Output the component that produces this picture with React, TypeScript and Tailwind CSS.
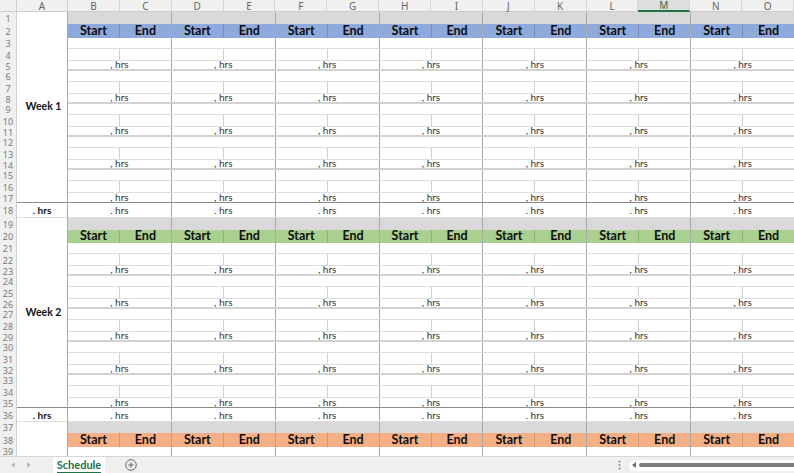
import React from "react";

type T =
  | "gray"
  | "blue"
  | "green"
  | "orange"
  | "blank"
  | "split"
  | "hrs"
  | "hrsLast"
  | "total"
  | "white";
type Row = { n: number; h: number; t: T };

function buildRows(): Row[] {
  const r: Row[] = [];
  r.push({ n: 1, h: 12, t: "gray" });
  r.push({ n: 2, h: 14, t: "blue" });
  let n = 3;
  for (let k = 0; k < 5; k++) {
    r.push({ n: n++, h: 11, t: "blank" });
    r.push({ n: n++, h: 12, t: "split" });
    r.push({ n: n++, h: 10, t: k === 4 ? "hrsLast" : "hrs" });
  }
  r.push({ n: 18, h: 15, t: "total" });
  r.push({ n: 19, h: 12, t: "gray" });
  r.push({ n: 20, h: 13, t: "green" });
  n = 21;
  for (let k = 0; k < 5; k++) {
    r.push({ n: n++, h: 11, t: "blank" });
    r.push({ n: n++, h: 12, t: "split" });
    r.push({ n: n++, h: 10, t: k === 4 ? "hrsLast" : "hrs" });
  }
  r.push({ n: 36, h: 14, t: "total" });
  r.push({ n: 37, h: 11, t: "gray" });
  r.push({ n: 38, h: 14, t: "orange" });
  r.push({ n: 39, h: 9, t: "white" });
  return r;
}

const ROWS = buildRows();

const H: Record<number, string> = {
  9: "h-[9px]",
  10: "h-[10px]",
  11: "h-[11px]",
  12: "h-[12px]",
  13: "h-[13px]",
  14: "h-[14px]",
  15: "h-[15px]",
};

const ROW_CLS: Record<T, string> = {
  gray: "bg-[#d9d9d9]",
  blue: "bg-[#8ea9db]",
  green: "bg-[#a9d08e]",
  orange: "bg-[#f4b084]",
  blank: "border-b border-[#dedede]",
  split: "border-b border-[#dedede]",
  hrs: "border-b-2 border-[#d2d2d2]",
  hrsLast: "border-b border-[#8c8c8c]",
  total: "border-b border-[#dedede]",
  white: "",
};

const LETTERS = ["B", "C", "D", "E", "F", "G", "H", "I", "J", "K", "L", "M", "N", "O"];

function Pair({ t, last }: { t: T; last: boolean }) {
  const br = last ? "" : "border-r border-[#a9a9a9]";
  if (t === "blue" || t === "green" || t === "orange") {
    return (
      <div className={`flex-1 flex ${br}`}>
        <div className="flex-1 flex items-center justify-center border-r border-[#00000026] text-[12.5px] font-bold leading-none text-[#0d0d0d]">
          Start
        </div>
        <div className="flex-1 flex items-center justify-center text-[12.5px] font-bold leading-none text-[#0d0d0d]">
          End
        </div>
      </div>
    );
  }
  if (t === "split") {
    return (
      <div className={`flex-1 flex ${br}`}>
        <div className="flex-1 border-r border-[#cfcfcf]" />
        <div className="flex-1" />
      </div>
    );
  }
  if (t === "hrs" || t === "hrsLast") {
    return (
      <div className={`flex-1 flex items-end justify-center ${br}`}>
        <span className="text-[10px] leading-[10px] text-[#333333] whitespace-nowrap">, hrs</span>
      </div>
    );
  }
  if (t === "total") {
    return (
      <div className={`flex-1 flex items-center justify-center ${br}`}>
        <span className="text-[10px] leading-none text-[#333333] whitespace-nowrap">. hrs</span>
      </div>
    );
  }
  return <div className={`flex-1 ${br}`} />;
}

function RowHeaderColumn() {
  return (
    <div className="w-[17px] flex flex-col bg-[#f0f0f0] border-r border-[#cfcfcf] font-['Noto_Sans',sans-serif]">
      <div className="h-[12px] border-b border-[#cdcdcd]" />
      {ROWS.map((r) => (
        <div
          key={r.n}
          className={`${H[r.h]} flex items-center justify-center overflow-hidden text-[9px] leading-[9px] text-[#7a7a7a]`}
        >
          {r.n}
        </div>
      ))}
    </div>
  );
}

function ColumnA() {
  return (
    <div className="w-[51px] flex flex-col">
      <div className="h-[12px] flex items-center justify-center bg-[#f0f0f0] border-b border-r border-[#cdcdcd] text-[10px] leading-none text-[#666666] font-['Noto_Sans',sans-serif]">
        A
      </div>
      <div className="flex-1 flex flex-col border-r border-[#a9a9a9]">
        <div className="h-[191px] flex items-center justify-center border-b border-[#8c8c8c] text-[10.5px] font-bold text-[#141414] pl-[3px]">
          Week 1
        </div>
        <div className="h-[15px] flex items-center justify-center border-b border-[#dedede] text-[10px] font-bold leading-none text-[#141414]">
          . hrs
        </div>
        <div className="h-[190px] flex items-center justify-center border-b border-[#8c8c8c] text-[10.5px] font-bold text-[#141414] pl-[3px]">
          Week 2
        </div>
        <div className="h-[14px] flex items-center justify-center border-b border-[#dedede] text-[10px] font-bold leading-none text-[#141414]">
          . hrs
        </div>
        <div className="flex-1" />
      </div>
    </div>
  );
}

function MainArea() {
  return (
    <div className="flex-1 flex flex-col min-w-0">
      <div className="h-[12px] flex font-['Noto_Sans',sans-serif]">
        {LETTERS.map((l) =>
          l === "M" ? (
            <div
              key={l}
              className="flex-1 flex items-center justify-center bg-[#dedede] border-r border-[#d4d4d4] border-b-2 border-b-[#217346] text-[10px] leading-none text-[#2f6b45]"
            >
              {l}
            </div>
          ) : (
            <div
              key={l}
              className="flex-1 flex items-center justify-center bg-[#f0f0f0] border-r border-b border-[#d6d6d6] border-b-[#cdcdcd] text-[10px] leading-none text-[#666666]"
            >
              {l}
            </div>
          )
        )}
      </div>
      {ROWS.map((r) => (
        <div key={r.n} className={`${H[r.h]} flex ${ROW_CLS[r.t]}`}>
          {[0, 1, 2, 3, 4, 5, 6].map((i) => (
            <Pair key={i} t={r.t} last={i === 6} />
          ))}
        </div>
      ))}
    </div>
  );
}

function TabBar() {
  return (
    <div className="h-[17px] flex items-stretch bg-[#efefef] border-t border-[#d6d6d6]">
      <div className="w-[53px] flex items-center pl-[11px] gap-[12px]">
        <svg width="4" height="6" viewBox="0 0 4 6">
          <path d="M4 0 L0 3 L4 6 Z" fill="#bdbdbd" />
        </svg>
        <svg width="4" height="6" viewBox="0 0 4 6">
          <path d="M0 0 L4 3 L0 6 Z" fill="#bdbdbd" />
        </svg>
      </div>
      <div className="w-[52px] bg-white flex items-center justify-center">
        <span className="text-[11px] font-bold leading-none text-[#217346] border-b-2 border-[#217346] pb-[2px] mt-[3px]">
          Schedule
        </span>
      </div>
      <div className="ml-[20px] flex items-center">
        <svg width="12" height="12" viewBox="0 0 12 12">
          <circle cx="6" cy="6" r="5.3" fill="none" stroke="#6b6b6b" strokeWidth="1" />
          <path d="M6 3.2 V8.8 M3.2 6 H8.8" stroke="#6b6b6b" strokeWidth="1" />
        </svg>
      </div>
      <div className="flex-1" />
      <div className="flex items-center">
        <svg width="3" height="10" viewBox="0 0 3 10">
          <circle cx="1.5" cy="1.5" r="1" fill="#8a8a8a" />
          <circle cx="1.5" cy="5" r="1" fill="#8a8a8a" />
          <circle cx="1.5" cy="8.5" r="1" fill="#8a8a8a" />
        </svg>
      </div>
      <div className="ml-[8px] w-[165px] flex items-center">
        <div className="w-full h-[11px] bg-white rounded-l-full flex items-center pl-[3px]">
          <svg width="4" height="6" viewBox="0 0 4 6">
            <path d="M4 0 L0 3 L4 6 Z" fill="#6b6b6b" />
          </svg>
          <div className="flex-1 ml-[3px] h-[4px] bg-[#7b7b7b] rounded-l-full" />
        </div>
      </div>
    </div>
  );
}

export default function App() {
  return (
    <div className="w-[794px] h-[473px] overflow-hidden bg-white flex flex-col font-['Lato',sans-serif]">
      <div className="h-[456px] flex overflow-hidden">
        <RowHeaderColumn />
        <ColumnA />
        <MainArea />
      </div>
      <TabBar />
    </div>
  );
}
